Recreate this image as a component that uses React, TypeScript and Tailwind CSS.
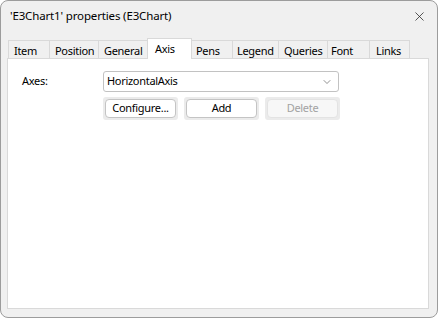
import { X, ChevronDown } from "lucide-react";

const tabs = [
  { label: "Item", w: "w-[42px]", pl: "pl-[5px]" },
  { label: "Position", w: "w-[50px]", pl: "pl-[5px]" },
  { label: "General", w: "w-[50px]", pl: "pl-[5px]" },
  { label: "Axis", w: "w-[45px]", pl: "pl-[7px]", active: true },
  { label: "Pens", w: "w-[42px]", pl: "pl-[4px]" },
  { label: "Legend", w: "w-[47px]", pl: "pl-[4px]" },
  { label: "Queries", w: "w-[50px]", pl: "pl-[5px]" },
  { label: "Font", w: "w-[43px]", pl: "pl-[3px]" },
  { label: "Links", w: "w-[41px]", pl: "pl-[6px]" },
];

function Btn({ children, disabled }: { children: string; disabled?: boolean }) {
  return (
    <div className="w-[75px] h-[23px] p-[2px] bg-[#ebebeb] rounded-[3px]">
      <div
        className={
          disabled
            ? "h-full rounded-[4px] border border-[#e3e3e3] bg-[#f7f7f7] text-[#a3a3a3] flex items-center justify-center"
            : "h-full rounded-[4px] border border-[#c4c4c4] bg-white flex items-center justify-center"
        }
      >
        {children}
      </div>
    </div>
  );
}

export default function App() {
  return (
    <div className="w-[438px] h-[318px] bg-[#f0f0f0] border border-[#9c9c9c] rounded-[8px] flex flex-col overflow-hidden font-['Noto_Sans',sans-serif] text-[11px] tracking-[-0.3px] text-black">
      <div className="h-[30px] flex items-center justify-between pl-[9px] pr-[10px]">
        <span className="text-[11.5px] tracking-[-0.15px]">'E3Chart1' properties (E3Chart)</span>
        <X className="w-[15px] h-[15px] text-[#222]" strokeWidth={1.2} />
      </div>
      <div className="flex-1 flex flex-col pl-[6px] pr-[8px] pb-[8px] mt-[7px]">
        <div className="flex items-end h-[21px] pl-[2px] relative z-10">
          {tabs.map((t) =>
            t.active ? (
              <div
                key={t.label}
                className={`${t.w} ${t.pl} h-[21px] -ml-px bg-white border border-b-0 border-[#d9d9d9] pt-[1px] leading-[17px]`}
              >
                {t.label}
              </div>
            ) : (
              <div
                key={t.label}
                className={`${t.w} ${t.pl} h-[18px] -ml-px bg-[#f0f0f0] border border-b-0 border-[#d9d9d9] leading-[19px] mb-px`}
              >
                {t.label}
              </div>
            )
          )}
        </div>
        <div className="flex-1 -mt-px bg-white border border-[#d9d9d9] pl-[14px] pt-[12px]">
          <div className="flex items-center h-[21px]">
            <span className="w-[81px]">Axes:</span>
            <div className="w-[236px] h-[21px] border border-[#c2c2c2] rounded-[3px] flex items-center justify-between pl-[3px] pr-[5px]">
              <span>HorizontalAxis</span>
              <ChevronDown className="w-[12px] h-[12px] text-[#555]" strokeWidth={1.3} />
            </div>
          </div>
          <div className="flex gap-[6px] ml-[81px] mt-[5px]">
            <Btn>Configure...</Btn>
            <Btn>Add</Btn>
            <Btn disabled>Delete</Btn>
          </div>
        </div>
      </div>
    </div>
  );
}
